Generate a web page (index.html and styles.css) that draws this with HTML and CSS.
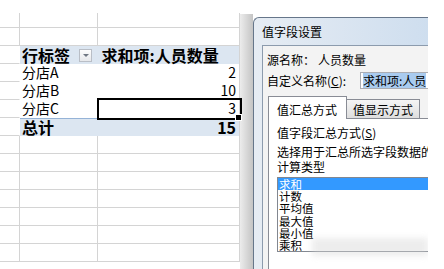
FILE: index.html
```html
<!DOCTYPE html>
<html lang="zh-CN">
<head>
  <meta charset="UTF-8" />
  <title>值字段设置</title>
  <link rel="stylesheet" href="styles.css">
</head>
<body>
  <div class="screen">
    <div class="sheet">
      <div class="row first"><div class="rh"></div><div class="ca"></div><div class="cb"></div></div>
      <div class="row"><div class="rh"></div><div class="ca"></div><div class="cb"></div></div>
      <div class="row pv head">
        <div class="rh"></div>
        <div class="ca"><span>行标签</span><span class="dd"></span></div>
        <div class="cb">求和项:人员数量</div>
      </div>
      <div class="row pv"><div class="rh"></div><div class="ca">分店A</div><div class="cb num">2</div></div>
      <div class="row pv"><div class="rh"></div><div class="ca">分店B</div><div class="cb num">10</div></div>
      <div class="row pv"><div class="rh"></div><div class="ca">分店C</div><div class="cb num sel">3<span class="handle"></span></div></div>
      <div class="row pv total"><div class="rh"></div><div class="ca">总计</div><div class="cb num">15</div></div>
      <div class="row"><div class="rh"></div><div class="ca"></div><div class="cb"></div></div>
      <div class="row"><div class="rh"></div><div class="ca"></div><div class="cb"></div></div>
      <div class="row"><div class="rh"></div><div class="ca"></div><div class="cb"></div></div>
      <div class="row"><div class="rh"></div><div class="ca"></div><div class="cb"></div></div>
      <div class="row"><div class="rh"></div><div class="ca"></div><div class="cb"></div></div>
      <div class="row"><div class="rh"></div><div class="ca"></div><div class="cb"></div></div>
      <div class="row"><div class="rh"></div><div class="ca"></div><div class="cb"></div></div>
    </div>
    <div class="shade"></div>
    <div class="dialog">
      <div class="title">值字段设置</div>
      <div class="body">
        <div class="src"><span class="lbl-src">源名称：</span><span>人员数量</span></div>
        <div class="custom">
          <span class="lbl-custom">自定义名称(<u>C</u>):</span>
          <div class="field"><span class="hl">求和项:人员</span></div>
        </div>
        <div class="tabs">
          <div class="tab on">值汇总方式</div>
          <div class="tab off">值显示方式</div>
        </div>
        <div class="panel">
          <div class="p1">值字段汇总方式(<u>S</u>)</div>
          <div class="p2">选择用于汇总所选字段数据的<br>计算类型</div>
          <div class="list">
            <div class="item picked">求和</div>
            <div class="item">计数</div>
            <div class="item">平均值</div>
            <div class="item">最大值</div>
            <div class="item">最小值</div>
            <div class="item">乘积</div>
          </div>
        </div>
      </div>
    </div>
    <div class="mark"></div>
  </div>
</body>
</html>
```

FILE: styles.css
```css
body {
  margin: 0;
  width: 444px;
  height: 269px;
  overflow: hidden;
  background: #fff;
  font-family: "Noto Sans CJK SC", sans-serif;
  color: #000;
}

.screen {
  position: relative;
  display: flex;
  width: 428px;
  height: 269px;
  overflow: hidden;
}

/* spreadsheet */
.sheet {
  flex: none;
  width: 240px;
  padding-top: 13px;
}

.row {
  display: flex;
  height: 18px;
  font-size: 14px;
  line-height: 16px;
}

.row.first {
  height: 15px;
}

.rh, .ca, .cb {
  box-sizing: border-box;
  height: 100%;
  border-right: 1px solid #d4d4d4;
  border-bottom: 1px solid #d4d4d4;
  white-space: nowrap;
}

.rh { width: 20px; }
.ca { width: 78px; padding-left: 2px; }
.cb { width: 142px; padding-left: 3px; }

.pv .rh { border-right-color: transparent; }
.pv .ca { border-right: 0; width: 79px; }
.pv .ca, .pv .cb { border-bottom: 0; }

.num {
  text-align: right;
  padding-right: 3px;
}

.head .ca, .head .cb {
  background: #dce6f1;
  font-weight: bold;
  font-size: 16px;
  line-height: 18px;
}

.head .ca {
  display: flex;
  align-items: center;
  gap: 9px;
}

.dd {
  width: 13px;
  height: 13px;
  box-sizing: border-box;
  border: 1px solid #b9bec6;
  background: linear-gradient(#fdfdfd, #e6e8eb);
  position: relative;
}

.dd::after {
  content: "";
  position: absolute;
  left: 3px;
  top: 4px;
  border-left: 3px solid transparent;
  border-right: 3px solid transparent;
  border-top: 3px solid #6f7782;
}

.total .ca, .total .cb {
  background: #dce6f1;
  border-top: 1px solid #95b3d7;
  font-weight: bold;
  font-size: 16px;
  line-height: 17px;
}

.sel {
  position: relative;
  outline: 2px solid #000;
}

.handle {
  position: absolute;
  right: -3px;
  bottom: -3px;
  width: 5px;
  height: 5px;
  background: #000;
  border: 1px solid #fff;
}

.shade {
  flex: none;
  width: 13px;
  margin-top: 14px;
  background: linear-gradient(to right, #ececec, #c4c4c4);
}

/* dialog */
.dialog {
  flex: none;
  width: 200px;
  height: 252px;
  margin-top: 17px;
  box-sizing: border-box;
  border: 1px solid #66768a;
  border-right: 0;
  border-bottom: 0;
  border-radius: 6px 0 0 0;
  padding-left: 8px;
  background: linear-gradient(to right, #e6ecf3, #cbdcee);
  display: flex;
  flex-direction: column;
  font-size: 12px;
}

.title {
  height: 27px;
  line-height: 27px;
  flex: none;
}

.body {
  flex: 1;
  border: 1px solid #8c9bad;
  border-right: 0;
  border-bottom: 0;
  background: #f3f3f3;
  padding-left: 4px;
  display: flex;
  flex-direction: column;
  white-space: nowrap;
}

.src {
  display: flex;
  margin-top: 6px;
  height: 16px;
  line-height: 16px;
}

.lbl-src { width: 51px; }

.custom {
  display: flex;
  margin-top: 4px;
  height: 17px;
  line-height: 15px;
}

.lbl-custom {
  width: 93px;
  line-height: 17px;
}

.field {
  flex: 1;
  border: 1px solid #abadb3;
  border-right: 0;
  background: #fff;
  padding-left: 2px;
  overflow: hidden;
}

.hl { background: #a9cbef; }

.tabs {
  display: flex;
  align-items: flex-end;
  margin-top: 7px;
  margin-left: 1px;
  height: 22px;
  flex: none;
}

.tab {
  box-sizing: border-box;
  border: 1px solid #898c95;
  border-bottom: 0;
  line-height: 16px;
}

.tab.on {
  width: 79px;
  height: 23px;
  margin-bottom: -1px;
  padding: 5px 0 0 8px;
  background: #fff;
  position: relative;
}

.tab.off {
  width: 73px;
  height: 19px;
  border-left: 0;
  padding: 2px 0 0 6px;
  background: linear-gradient(#f5f5f5, #dedede);
}

.panel {
  flex: 1;
  margin-left: 1px;
  border: 1px solid #898c95;
  border-right: 0;
  border-bottom: 0;
  background: #fff;
  padding-left: 8px;
}

.p1 {
  margin-top: 6px;
  line-height: 16px;
}

.p2 {
  margin-top: 3px;
  line-height: 15px;
}

.list {
  margin-top: 3px;
  height: 75px;
  box-sizing: border-box;
  border: 1px solid #828790;
  border-right: 0;
  font-size: 11.5px;
}

.item {
  height: 12.2px;
  line-height: 12.2px;
  padding-left: 1px;
}

.item.picked {
  background: #3399ff;
  color: #fff;
}

/* faint watermark over the dialog */
.mark {
  position: absolute;
  left: 312px;
  top: 238px;
  width: 116px;
  height: 18px;
  background: rgba(215, 215, 215, 0.45);
  filter: blur(3px);
}
```
